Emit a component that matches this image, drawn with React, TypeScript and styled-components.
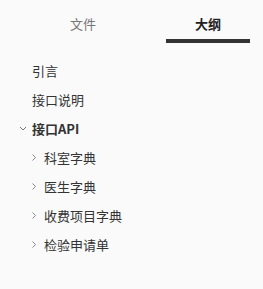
import React, { useState } from 'react';
import styled, { createGlobalStyle } from 'styled-components';

const GlobalStyle = createGlobalStyle`
  html, body {
    margin: 0;
    padding: 0;
    background: #fafafa;
  }
  body {
    font-family: "Noto Sans CJK SC", "Noto Sans", sans-serif;
  }
`;

type Node = {
  title: string;
  children?: Node[];
};

const outline: Node[] = [
  { title: '引言' },
  { title: '接口说明' },
  {
    title: '接口API',
    children: [
      { title: '科室字典', children: [] },
      { title: '医生字典', children: [] },
      { title: '收费项目字典', children: [] },
      { title: '检验申请单', children: [] },
    ],
  },
];

export default function App() {
  const [tab, setTab] = useState(1);

  return (
    <>
      <GlobalStyle />
      <Panel>
        <TabBar>
          <Tab $active={tab === 0} $width={166} onClick={() => setTab(0)}>
            文件
          </Tab>
          <Tab $active={tab === 1} $width={84} onClick={() => setTab(1)}>
            大纲
          </Tab>
        </TabBar>
        <Tree>
          {outline.map((node) => (
            <TreeItem key={node.title} node={node} level={0} />
          ))}
        </Tree>
      </Panel>
    </>
  );
}

const TreeItem = ({ node, level }: { node: Node; level: number }) => {
  const [open, setOpen] = useState(level === 0);
  const hasChildren = node.children !== undefined;
  const expanded = hasChildren && open && node.children!.length > 0;

  return (
    <>
      <Row $level={level} onClick={() => setOpen(!open)}>
        <Caret>
          {hasChildren &&
            (expanded ? (
              <svg width="12" height="12" viewBox="0 0 12 12">
                <polyline points="2,4 5,7 8,4" fill="none" stroke="#777" strokeWidth="1" />
              </svg>
            ) : (
              <svg width="12" height="12" viewBox="0 0 12 12">
                <polyline points="2.5,2.5 5.5,5.5 2.5,8.5" fill="none" stroke="#888" strokeWidth="1" />
              </svg>
            ))}
        </Caret>
        <Label $bold={level === 0 && hasChildren}>{node.title}</Label>
      </Row>
      {expanded &&
        node.children!.map((child) => (
          <TreeItem key={child.title} node={child} level={level + 1} />
        ))}
    </>
  );
};

const Panel = styled.div`
  width: 263px;
  height: 289px;
  background: #fafafa;
  overflow: hidden;
`;

const TabBar = styled.div`
  display: flex;
  height: 43px;
`;

const Tab = styled.div<{ $active: boolean; $width: number }>`
  width: ${(p) => p.$width}px;
  box-sizing: border-box;
  padding-top: 15px;
  height: 43px;
  line-height: 18px;
  text-align: center;
  font-size: 13px;
  cursor: pointer;
  color: ${(p) => (p.$active ? '#222' : '#777')};
  font-weight: ${(p) => (p.$active ? 700 : 400)};
  border-bottom: 4px solid ${(p) => (p.$active ? '#333' : 'transparent')};
`;

const Tree = styled.div`
  padding-top: 13px;
`;

const Row = styled.div<{ $level: number }>`
  display: flex;
  align-items: center;
  height: 29px;
  padding-left: ${(p) => 18 + p.$level * 12}px;
  cursor: pointer;
`;

const Caret = styled.span`
  display: flex;
  width: 12px;
  height: 12px;
  margin-right: 2px;
  flex-shrink: 0;
`;

const Label = styled.span<{ $bold: boolean }>`
  font-size: 13px;
  color: #333;
  font-weight: ${(p) => (p.$bold ? 700 : 400)};
`;
